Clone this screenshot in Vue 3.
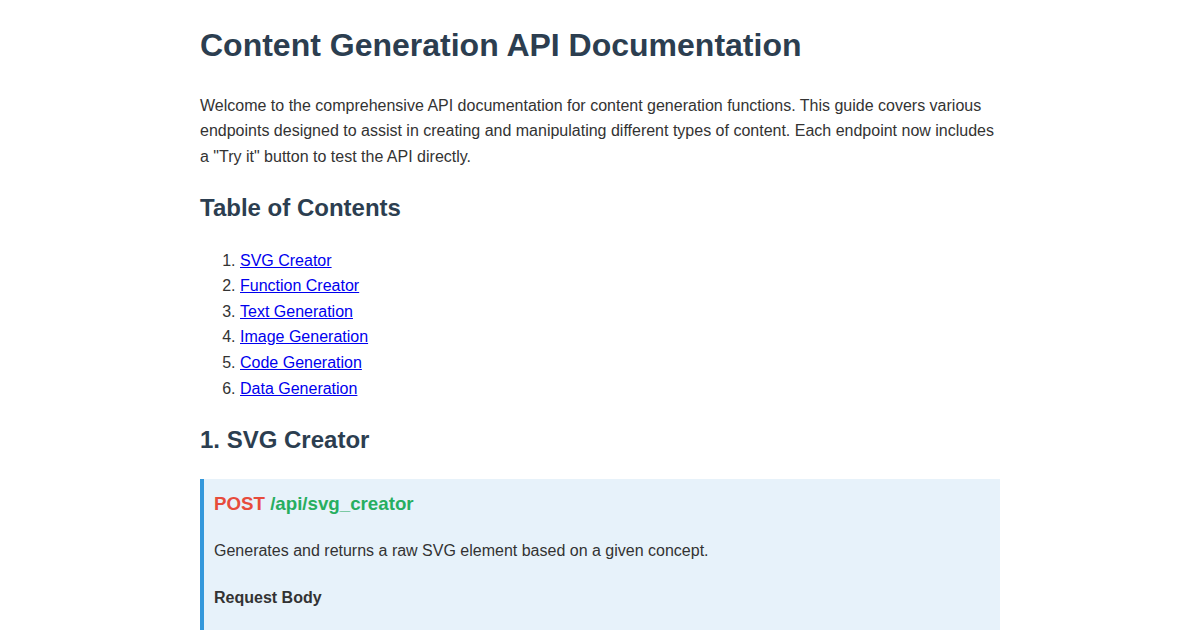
<template>
  <div class="doc">
    <h1>Content Generation API Documentation</h1>
    <p>Welcome to the comprehensive API documentation for content generation functions. This guide covers various endpoints designed to assist in creating and manipulating different types of content. Each endpoint now includes a "Try it" button to test the API directly.</p>

    <h2>Table of Contents</h2>
    <ol>
      <li v-for="item in toc" :key="item"><a href="#">{{ item }}</a></li>
    </ol>

    <h2>1. SVG Creator</h2>
    <div class="endpoint">
      <h3><span class="method">POST</span> <span class="path">/api/svg_creator</span></h3>
      <p>Generates and returns a raw SVG element based on a given concept.</p>
      <h4>Request Body</h4>
    </div>
  </div>
</template>

<script setup>
const toc = [
  'SVG Creator',
  'Function Creator',
  'Text Generation',
  'Image Generation',
  'Code Generation',
  'Data Generation'
]
</script>

<style>
html, body {
  overflow: hidden;
}
</style>

<style scoped>
.doc {
  font-family: "Liberation Sans", Arial, sans-serif;
  line-height: 1.6;
  color: #333;
  max-width: 800px;
  margin: 0 auto;
  padding: 20px;
  box-sizing: content-box;
}

h1, h2 {
  color: #2c3e50;
}

h1 {
  font-size: 32px;
  margin: 0 0 21.44px;
}

h2 {
  font-size: 24px;
  margin: 19.92px 0;
}

p {
  font-size: 16px;
  margin: 16px 0;
}

ol {
  font-size: 16px;
  margin: 16px 0;
  padding-left: 40px;
}

a {
  color: #0000ee;
}

.endpoint {
  background: #e7f2fa;
  border-left: 4px solid #3498db;
  padding: 10px;
  margin-bottom: 20px;
}

h3 {
  font-size: 18.72px;
  margin: 0 0 18.72px;
}

h4 {
  font-size: 16px;
  margin: 21.28px 0;
}

.method {
  color: #e74c3c;
}

.path {
  color: #27ae60;
}
</style>
